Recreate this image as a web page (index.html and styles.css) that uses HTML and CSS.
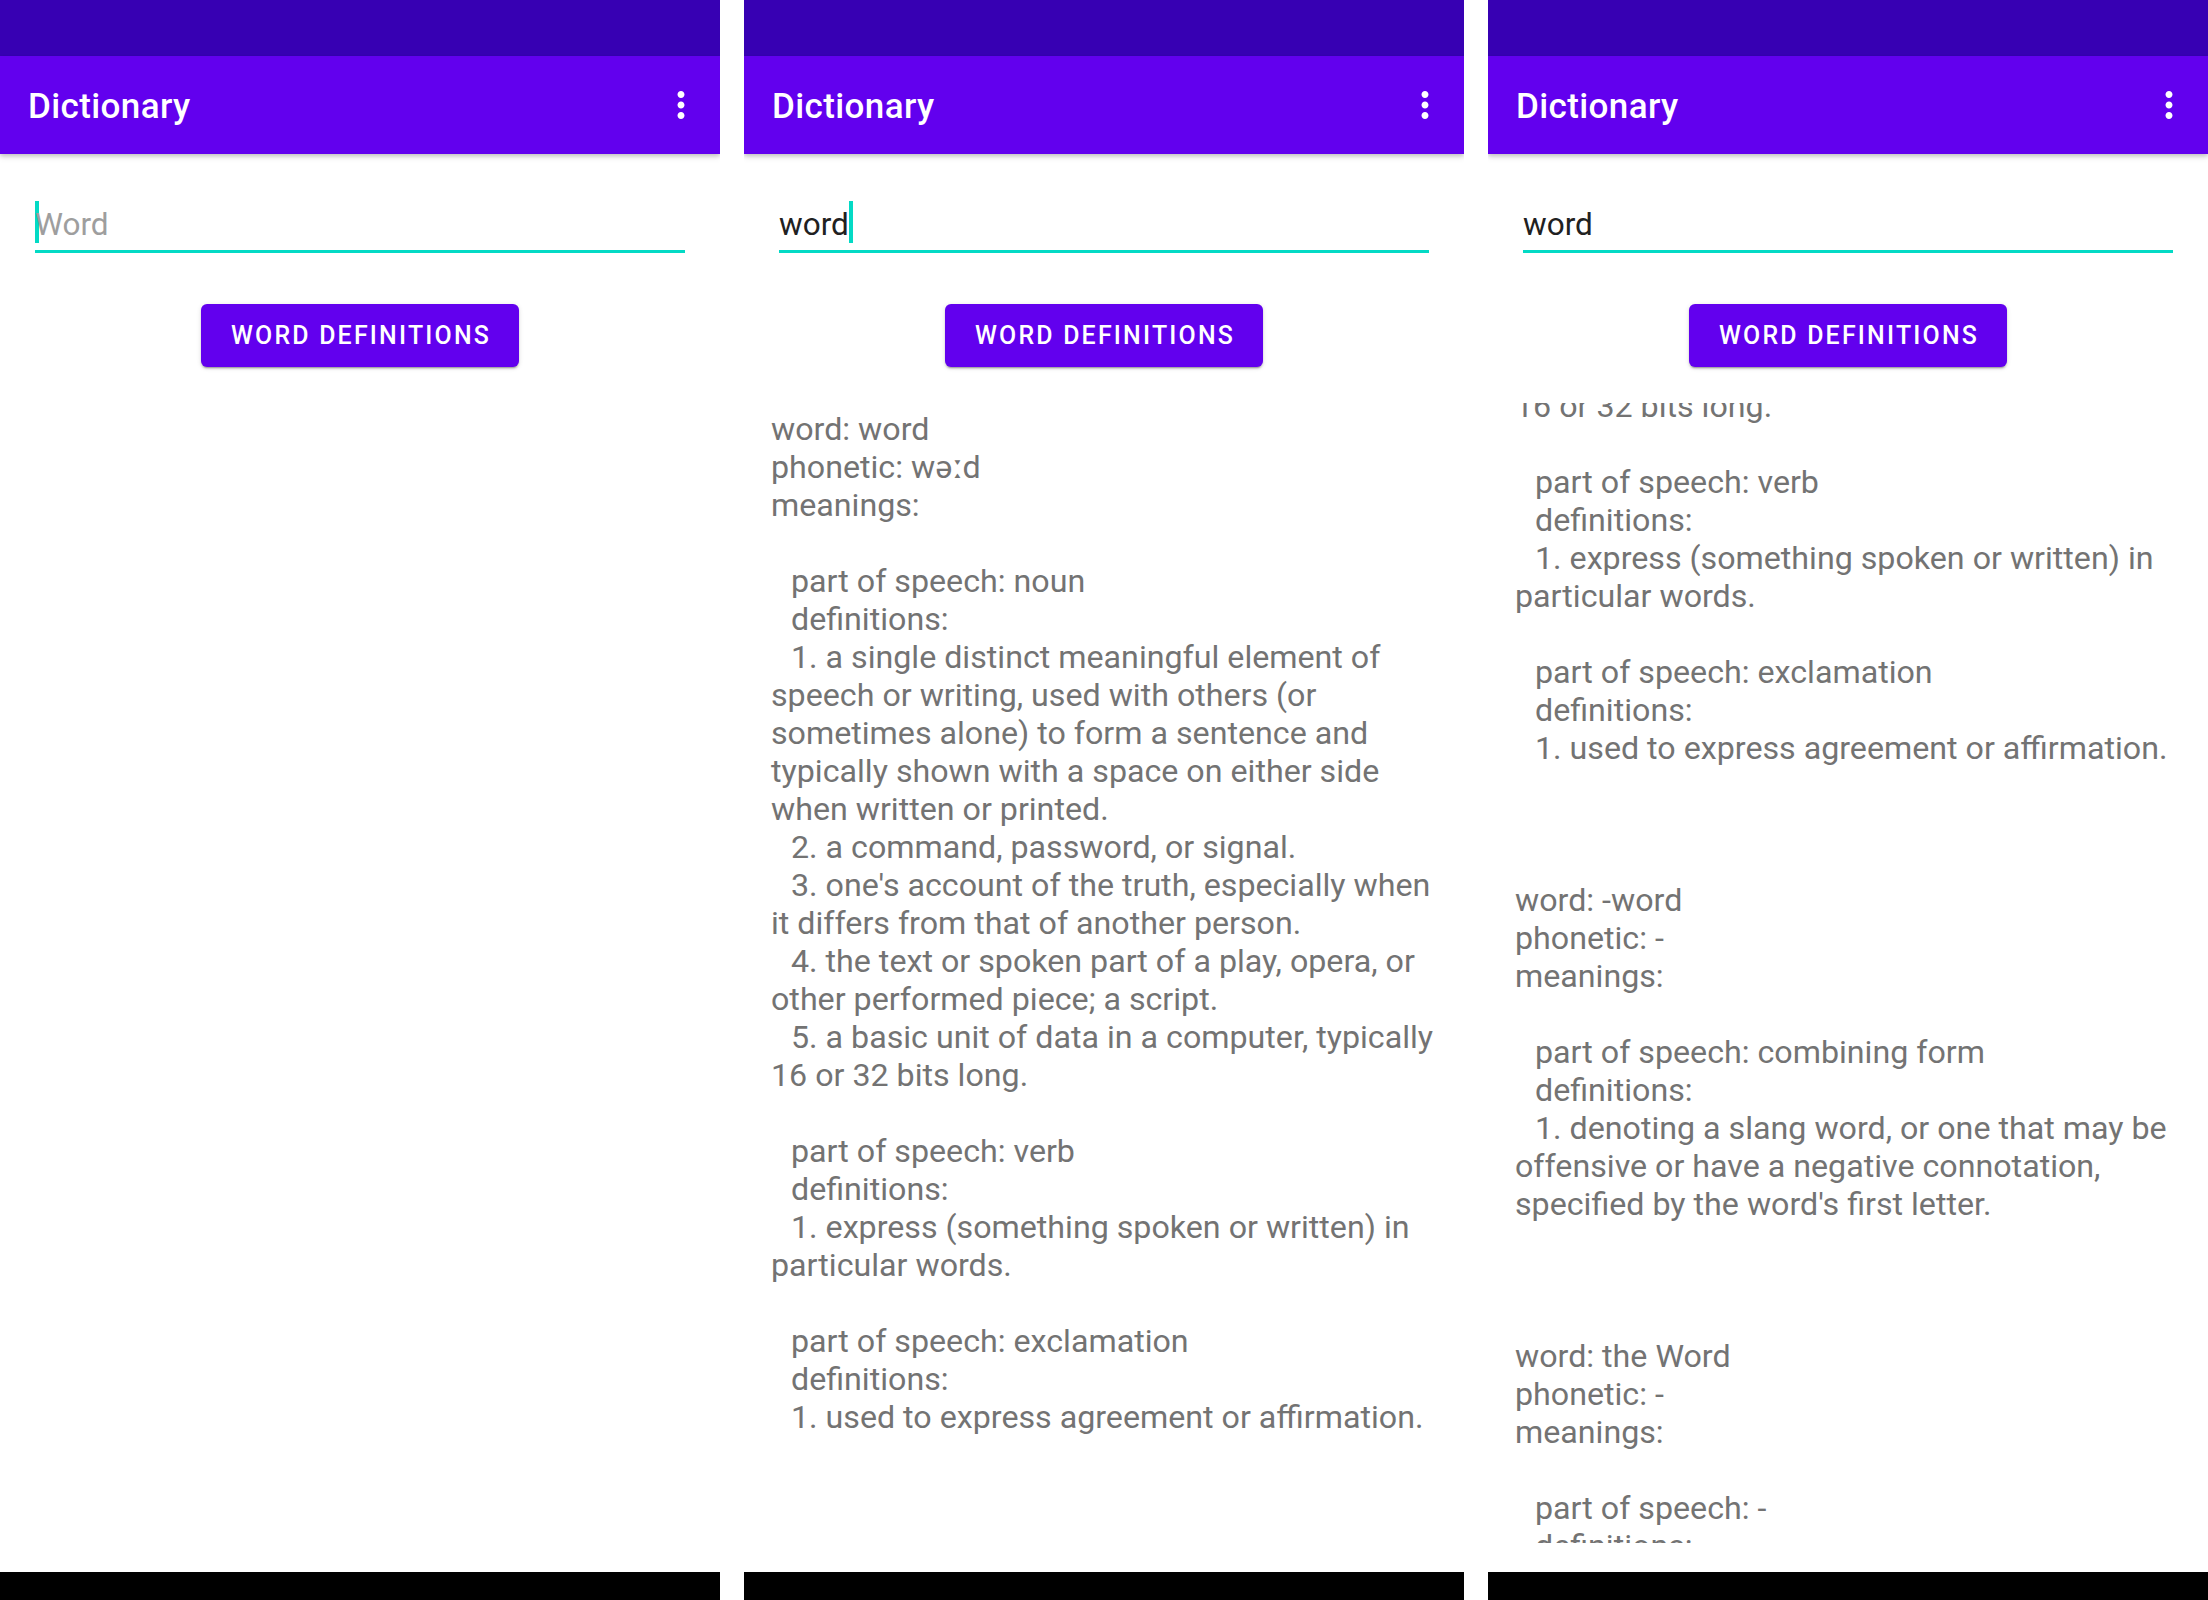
FILE: index.html
```html
<!DOCTYPE html>
<html lang="en">
<head>
<meta charset="utf-8">
<title>Dictionary</title>
<link rel="stylesheet" href="styles.css">
</head>
<body>
<div class="screens">

  <div class="screen">
    <div class="status"></div>
    <header class="appbar">
      <h1 class="title">Dictionary</h1>
      <svg class="more" viewBox="0 0 24 24"><path d="M12 8c1.1 0 2-.9 2-2s-.9-2-2-2-2 .9-2 2 .9 2 2 2zm0 2c-1.1 0-2 .9-2 2s.9 2 2 2 2-.9 2-2-.9-2-2-2zm0 6c-1.1 0-2 .9-2 2s.9 2 2 2 2-.9 2-2-.9-2-2-2z"/></svg>
    </header>
    <div class="field"><span class="caret lead"></span><span class="hint">Word</span></div>
    <button class="btn">WORD DEFINITIONS</button>
    <div class="scroll"><div class="result"></div></div>
    <div class="navbar"></div>
  </div>

  <div class="screen">
    <div class="status"></div>
    <header class="appbar">
      <h1 class="title">Dictionary</h1>
      <svg class="more" viewBox="0 0 24 24"><path d="M12 8c1.1 0 2-.9 2-2s-.9-2-2-2-2 .9-2 2 .9 2 2 2zm0 2c-1.1 0-2 .9-2 2s.9 2 2 2 2-.9 2-2-.9-2-2-2zm0 6c-1.1 0-2 .9-2 2s.9 2 2 2 2-.9 2-2-.9-2-2-2z"/></svg>
    </header>
    <div class="field"><span class="val">word</span><span class="caret"></span></div>
    <button class="btn">WORD DEFINITIONS</button>
    <div class="scroll">
      <div class="result">
        <div class="ln">word: word</div>
        <div class="ln">phonetic: wəːd</div>
        <div class="ln">meanings:</div>
        <div class="ln"></div>
        <div class="ln in">part of speech: noun</div>
        <div class="ln in">definitions:</div>
        <div class="ln in">1. a single distinct meaningful element of speech or writing, used with others (or sometimes alone) to form a sentence and typically shown with a space on either side when written or printed.</div>
        <div class="ln in">2. a command, password, or signal.</div>
        <div class="ln in">3. one's account of the truth, especially when it differs from that of another person.</div>
        <div class="ln in">4. the text or spoken part of a play, opera, or other performed piece; a script.</div>
        <div class="ln in">5. a basic unit of data in a computer, typically 16 or 32 bits long.</div>
        <div class="ln"></div>
        <div class="ln in">part of speech: verb</div>
        <div class="ln in">definitions:</div>
        <div class="ln in">1. express (something spoken or written) in particular words.</div>
        <div class="ln"></div>
        <div class="ln in">part of speech: exclamation</div>
        <div class="ln in">definitions:</div>
        <div class="ln in">1. used to express agreement or affirmation.</div>
        <div class="ln"></div>
        <div class="ln"></div>
        <div class="ln"></div>
        <div class="ln">word: -word</div>
        <div class="ln">phonetic: -</div>
        <div class="ln">meanings:</div>
      </div>
    </div>
    <div class="navbar"></div>
  </div>

  <div class="screen">
    <div class="status"></div>
    <header class="appbar">
      <h1 class="title">Dictionary</h1>
      <svg class="more" viewBox="0 0 24 24"><path d="M12 8c1.1 0 2-.9 2-2s-.9-2-2-2-2 .9-2 2 .9 2 2 2zm0 2c-1.1 0-2 .9-2 2s.9 2 2 2 2-.9 2-2-.9-2-2-2zm0 6c-1.1 0-2 .9-2 2s.9 2 2 2 2-.9 2-2-.9-2-2-2z"/></svg>
    </header>
    <div class="field"><span class="val">word</span></div>
    <button class="btn">WORD DEFINITIONS</button>
    <div class="scroll">
      <div class="result scrolled">
        <div class="ln">word: word</div>
        <div class="ln">phonetic: wəːd</div>
        <div class="ln">meanings:</div>
        <div class="ln"></div>
        <div class="ln in">part of speech: noun</div>
        <div class="ln in">definitions:</div>
        <div class="ln in">1. a single distinct meaningful element of speech or writing, used with others (or sometimes alone) to form a sentence and typically shown with a space on either side when written or printed.</div>
        <div class="ln in">2. a command, password, or signal.</div>
        <div class="ln in">3. one's account of the truth, especially when it differs from that of another person.</div>
        <div class="ln in">4. the text or spoken part of a play, opera, or other performed piece; a script.</div>
        <div class="ln in">5. a basic unit of data in a computer, typically 16 or 32 bits long.</div>
        <div class="ln"></div>
        <div class="ln in">part of speech: verb</div>
        <div class="ln in">definitions:</div>
        <div class="ln in">1. express (something spoken or written) in particular words.</div>
        <div class="ln"></div>
        <div class="ln in">part of speech: exclamation</div>
        <div class="ln in">definitions:</div>
        <div class="ln in">1. used to express agreement or affirmation.</div>
        <div class="ln"></div>
        <div class="ln"></div>
        <div class="ln"></div>
        <div class="ln">word: -word</div>
        <div class="ln">phonetic: -</div>
        <div class="ln">meanings:</div>
        <div class="ln"></div>
        <div class="ln in">part of speech: combining form</div>
        <div class="ln in">definitions:</div>
        <div class="ln in">1. denoting a slang word, or one that may be offensive or have a negative connotation, specified by the word's first letter.</div>
        <div class="ln"></div>
        <div class="ln"></div>
        <div class="ln"></div>
        <div class="ln">word: the Word</div>
        <div class="ln">phonetic: -</div>
        <div class="ln">meanings:</div>
        <div class="ln"></div>
        <div class="ln in">part of speech: -</div>
        <div class="ln in">definitions:</div>
        <div class="ln in">1. -</div>
      </div>
    </div>
    <div class="navbar"></div>
  </div>

</div>
</body>
</html>
```

FILE: styles.css
```css
* {
  box-sizing: border-box;
}

html, body {
  margin: 0;
  padding: 0;
  background: #ffffff;
  font-family: Roboto, "Noto Sans", "Liberation Sans", sans-serif;
}

.screens {
  display: flex;
  gap: 24px;
  width: 2208px;
  height: 1600px;
}

.screen {
  width: 720px;
  height: 1600px;
  flex: none;
  display: flex;
  flex-direction: column;
  background: #ffffff;
  overflow: hidden;
}

.status {
  flex: none;
  height: 56px;
  background: #3700b3;
}

.appbar {
  flex: none;
  height: 98px;
  background: #6200ee;
  display: flex;
  align-items: center;
  justify-content: space-between;
  padding: 0 18px 0 28px;
  box-shadow: 0 2px 4px rgba(0, 0, 0, 0.18), 0 4px 6px rgba(0, 0, 0, 0.08);
  position: relative;
  z-index: 1;
}

.title {
  margin: 3px 0 0;
  font-size: 35px;
  font-weight: 500;
  letter-spacing: 0.4px;
  color: #ffffff;
  line-height: 40px;
}

.more {
  width: 42px;
  height: 42px;
  fill: #ffffff;
  flex: none;
}

.field {
  flex: none;
  margin: 47px 35px 0;
  display: flex;
  align-items: flex-start;
  padding-bottom: 7px;
  border-bottom: 3px solid #03dac5;
  min-height: 52px;
}

.val,
.hint {
  font-size: 31.5px;
  line-height: 37px;
  margin-top: 5px;
  white-space: pre;
}

.val {
  color: #212121;
}

.hint {
  color: #9e9e9e;
}

.caret {
  flex: none;
  width: 4px;
  height: 42px;
  background: #03dac5;
}

.caret.lead {
  margin-right: -4px;
}

.btn {
  flex: none;
  align-self: center;
  margin-top: 51px;
  height: 63px;
  padding: 0 28px 0 30px;
  border: 0;
  border-radius: 6px;
  background: #6200ee;
  color: #ffffff;
  font-family: Roboto, "Noto Sans", sans-serif;
  font-weight: 500;
  font-size: 24.9px;
  letter-spacing: 2.22px;
  box-shadow: 0 3px 1px -2px rgba(0, 0, 0, 0.2), 0 2px 2px 0 rgba(0, 0, 0, 0.14), 0 1px 5px 0 rgba(0, 0, 0, 0.12);
}

.scroll {
  flex: none;
  margin-top: 36px;
  height: 1140px;
  overflow: hidden;
}

.result {
  padding: 7px 22px 0 27px;
  font-size: 32.2px;
  line-height: 38px;
  color: #737373;
}

.result.scrolled {
  margin-top: -669px;
}

.ln {
  min-height: 38px;
}

.ln.in {
  text-indent: 20px;
}

.navbar {
  flex: none;
  margin-top: auto;
  height: 28px;
  background: #000000;
}
```
